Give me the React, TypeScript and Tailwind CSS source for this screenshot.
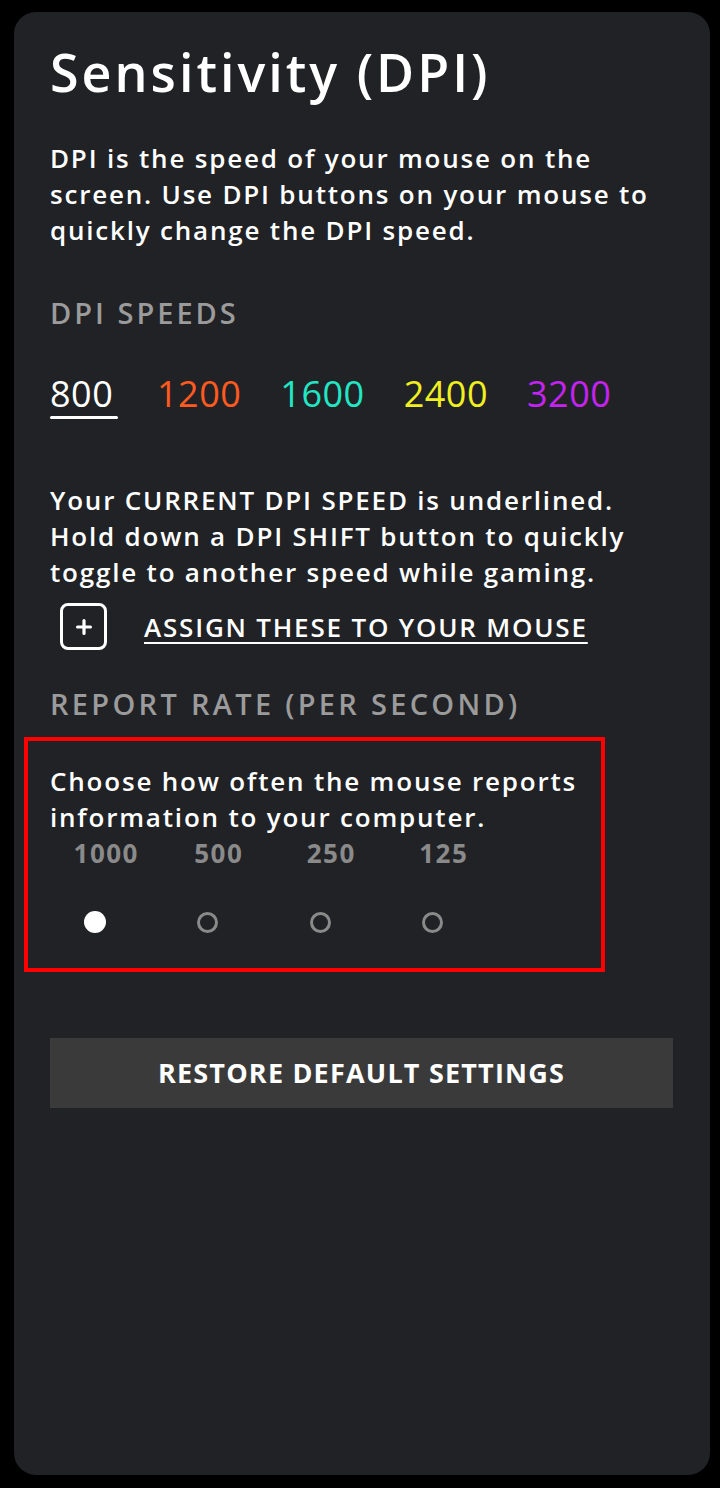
import { useState } from 'react';

const speeds = [
  { value: '800', color: 'text-white' },
  { value: '1200', color: 'text-[#ff5a1f]' },
  { value: '1600', color: 'text-[#22e6c4]' },
  { value: '2400', color: 'text-[#f0f020]' },
  { value: '3200', color: 'text-[#c423f0]' },
];

const rates = ['1000', '500', '250', '125'];

export default function App() {
  const [rate, setRate] = useState('1000');

  return (
    <div className="min-h-[1488px] bg-black pl-[14px] pr-[10px] pt-[12px] pb-[13px] font-['Open_Sans',sans-serif]">
      <div className="flex h-[1463px] flex-col rounded-[22px] bg-[#212226] pl-[36px] pr-[37px] pt-[30px] text-white">
        <h1 className="text-[52px] leading-[60px] font-semibold tracking-[3px] whitespace-nowrap">Sensitivity (DPI)</h1>

        <p className="mt-[38px] text-[26px] leading-[36px] font-semibold tracking-[1.8px] whitespace-nowrap">
          DPI is the speed of your mouse on the
          <br />
          screen. Use DPI buttons on your mouse to
          <br />
          quickly change the DPI speed.
        </p>

        <h2 className="mt-[45px] text-[29px] leading-[40px] font-semibold tracking-[3px] text-[#9b9b9b]">DPI SPEEDS</h2>

        <div className="mt-[39px] flex gap-[39px]">
          {speeds.map((s, i) => (
            <div key={s.value} className={`flex flex-col ${i === 0 ? 'w-[68px]' : ''}`}>
              <span className={`text-[36px] leading-[44px] tracking-[0.5px] ${s.color}`}>{s.value}</span>
              {i === 0 ? <span className="h-[3px] w-full rounded-full bg-white" /> : <span className="h-[3px]" />}
            </div>
          ))}
        </div>

        <p className="mt-[63px] text-[26px] leading-[36px] font-semibold tracking-[1.8px] whitespace-nowrap">
          Your CURRENT DPI SPEED is underlined.
          <br />
          Hold down a DPI SHIFT button to quickly
          <br />
          toggle to another speed while gaming.
        </p>

        <div className="mt-[13px] flex items-center gap-[37px] pl-[10px]">
          <span className="flex h-[47px] w-[47px] items-center justify-center rounded-[8px] border-[3px] border-white">
            <svg viewBox="0 0 24 24" className="h-[22px] w-[22px]" fill="none" stroke="currentColor" strokeWidth={3.5} strokeLinecap="round">
              <path d="M12 5v14M5 12h14" />
            </svg>
          </span>
          <a href="#" className="text-[26px] leading-[36px] font-semibold underline decoration-2 underline-offset-[5px] tracking-[1.8px] whitespace-nowrap">
            ASSIGN THESE TO YOUR MOUSE
          </a>
        </div>

        <h2 className="mt-[34px] text-[29px] leading-[40px] font-semibold tracking-[3.3px] text-[#9b9b9b] whitespace-nowrap">
          REPORT RATE (PER SECOND)
        </h2>

        <div className="-ml-[26px] mt-[13px] w-[581px] border-[4px] border-[#ff0000] pl-[22px] pt-[22px] pb-[34px]">
          <p className="text-[26px] leading-[36px] font-semibold tracking-[1.8px] whitespace-nowrap">
            Choose how often the mouse reports
            <br />
            information to your computer.
          </p>
          <div className="flex">
            {rates.map((r) => (
              <button key={r} onClick={() => setRate(r)} className="flex w-[112.5px] flex-col items-center">
                <span className="text-[26px] leading-[36px] font-bold tracking-[1.5px] text-[#8a8a8a]">{r}</span>
                <span className="mt-[39px] mr-[22px] flex h-[24px] w-[24px] items-center justify-center">
                  {rate === r ? (
                    <span className="h-[22px] w-[22px] rounded-full bg-white" />
                  ) : (
                    <span className="h-[21px] w-[21px] rounded-full border-[3px] border-[#8a8a8a]" />
                  )}
                </span>
              </button>
            ))}
          </div>
        </div>

        <button className="mt-[66px] h-[70px] bg-[#3a3a3a] text-[27px] font-bold tracking-[1.2px] text-white">
          RESTORE DEFAULT SETTINGS
        </button>
      </div>
    </div>
  );
}
